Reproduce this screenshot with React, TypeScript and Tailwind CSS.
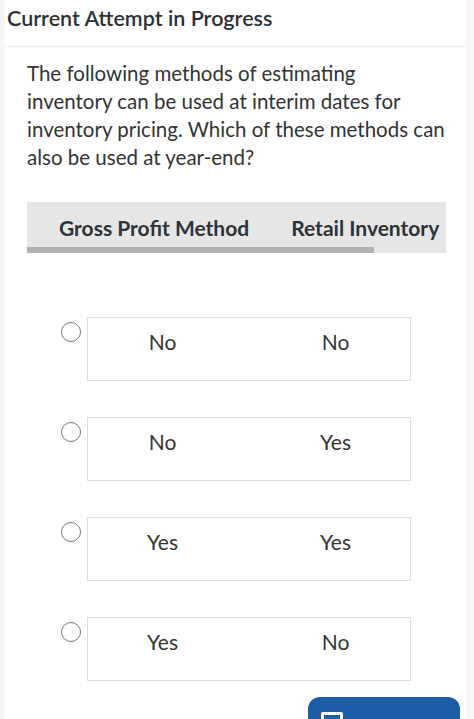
import React from "react";

const options = [
  ["No", "No"],
  ["No", "Yes"],
  ["Yes", "Yes"],
  ["Yes", "No"],
];

// Question card with answer choices
const App = () => {
  return (
    <div className="relative w-[474px] h-[719px] overflow-hidden bg-[#f6f6f6] font-['Lato','Liberation_Sans',sans-serif] text-[#2e3338]">
      <div className="ml-[5px] mr-[8px] h-full bg-white">
        <div className="h-[47px] border-b border-[#eeeeee] pl-[2px] pt-[3px]">
          <h1 className="text-[21.5px] leading-[30px] font-semibold text-[#2b3136]">
            Current Attempt in Progress
          </h1>
        </div>

        <div className="pl-[22px] pr-[10px] pt-[12px]">
          <p className="text-[20.5px] leading-[28px] text-[#333333] whitespace-nowrap">
            The following methods of estimating
            <br />
            inventory can be used at interim dates for
            <br />
            inventory pricing. Which of these methods can
            <br />
            also be used at year-end?
          </p>

          <div className="mt-[31px] w-[419px] h-[51px] bg-[#e6e6e6] flex flex-col">
            <div className="flex-1 flex items-center pt-[6px] text-[21px] font-bold text-[#2e3338]">
              <span className="ml-[32px]">Gross Profit Method</span>
              <span className="ml-[42px] whitespace-nowrap">Retail Inventory</span>
            </div>
            <div className="h-[6px] w-[347px] bg-[#b1b1b1]" />
          </div>

          <div className="mt-[64px] flex flex-col gap-[36px]">
            {options.map((o, i) => (
              <div key={i} className="flex items-start">
                <div className="mt-[5px] ml-[34px] w-[20px] h-[20px] rounded-full border border-[#777777] bg-white" />
                <div className="ml-[6px] w-[324px] h-[64px] border border-[#dddddd] flex pt-[10px] text-[21px] leading-[28px] text-[#333333]">
                  <span className="w-[150px] text-center">{o[0]}</span>
                  <span className="ml-[24px] w-[150px] text-center">{o[1]}</span>
                </div>
              </div>
            ))}
          </div>
        </div>
      </div>

      <div className="absolute left-[308px] top-[697px] w-[152px] h-[50px] rounded-[12px] bg-[#1e5da8] flex items-start pt-[15px] pl-[13px] gap-[12px]">
        <div className="w-[22px] h-[18px] border-[3px] border-white rounded-[2px]" />
        <span className="mt-[2px] text-[16px] font-bold tracking-[2px] text-white">SUPPORT</span>
      </div>
    </div>
  );
};

export default App;
